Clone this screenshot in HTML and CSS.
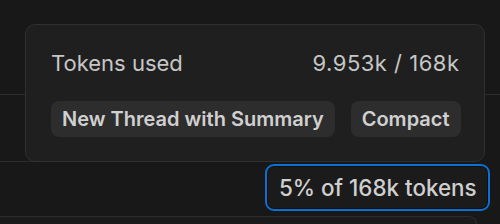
FILE: index.html
```html
<!DOCTYPE html>
<html lang="en">
<head>
<meta charset="utf-8">
<title>Token usage</title>
<link rel="stylesheet" href="styles.css">
</head>
<body>
<div class="page">
  <div class="region region-top"></div>
  <div class="region region-mid"></div>
  <div class="footer">
    <button class="usage-badge">5% of 168k tokens</button>
  </div>
  <div class="editor-box"></div>

  <div class="popover">
    <div class="popover-row">
      <span class="label">Tokens used</span>
      <span class="value">9.953k / 168k</span>
    </div>
    <div class="popover-actions">
      <button class="action">New Thread with Summary</button>
      <button class="action">Compact</button>
    </div>
  </div>
</div>
</body>
</html>
```
FILE: styles.css
```css
* { box-sizing: border-box; }
html, body {
  margin: 0;
  padding: 0;
  background: #181818;
  font-family: Inter, "Noto Sans", "DejaVu Sans", sans-serif;
  color: #c8c8c8;
}
.page {
  position: relative;
  width: 500px;
  height: 224px;
  overflow: hidden;
  display: flex;
  flex-direction: column;
}
.region-top {
  height: 95px;
  border-bottom: 1px solid #2c2c2c;
}
.region-mid {
  height: 67px;
  border-bottom: 1px solid #2c2c2c;
  margin-right: 235px;
}
.footer {
  display: flex;
  justify-content: flex-end;
  padding: 3px 10px 0 0;
  margin-top: -1px;
}
.usage-badge {
  height: 47px;
  width: 225px;
  border: 2px solid #0b6fd3;
  border-radius: 9px;
  background: #1b1b1b;
  box-shadow: inset 0 0 0 1px #0e0e0e;
  color: #cfcfcf;
  font-family: inherit;
  font-size: 22.4px;
  font-weight: 500;
  padding: 0 12px;
  text-align: left;
  white-space: nowrap;
}
.editor-box {
  margin-top: 5px;
  margin-right: 23px;
  flex: 1;
  border-top: 1px solid #2c2c2c;
  border-right: 1px solid #2c2c2c;
  border-top-right-radius: 9px;
  background: #1b1b1b;
}
.popover {
  position: absolute;
  left: 25px;
  top: 24px;
  width: 460px;
  height: 138px;
  background: #1f1f1f;
  border: 1px solid #303030;
  border-radius: 10px;
  padding: 25px 25px 24px;
  display: flex;
  flex-direction: column;
  gap: 25px;
}
.popover-row {
  display: flex;
  justify-content: space-between;
  align-items: baseline;
  font-size: 22px;
  line-height: 26px;
  color: #c6c6c6;
}
.value {
  letter-spacing: 0.5px;
  margin-right: -0.5px;
}
.popover-actions {
  display: flex;
  gap: 16px;
}
.action {
  height: 36px;
  border: none;
  border-radius: 8px;
  background: #2d2d2d;
  color: #d0d0d0;
  font-family: inherit;
  font-size: 20px;
  font-weight: 600;
  padding: 0 11px;
  white-space: nowrap;
}
.action:last-child {
  margin-left: auto;
  margin-right: 1px;
}
```
